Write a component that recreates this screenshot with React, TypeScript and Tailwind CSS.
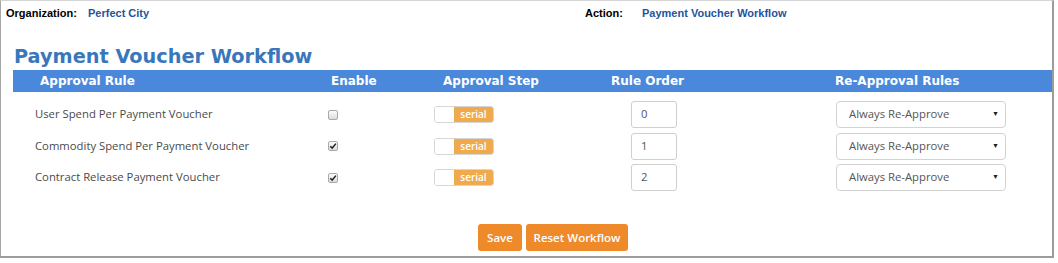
import React from "react";

const rules = [
  { name: "User Spend Per Payment Voucher", enabled: false, order: "0" },
  { name: "Commodity Spend Per Payment Voucher", enabled: true, order: "1" },
  { name: "Contract Release Payment Voucher", enabled: true, order: "2" },
];

const cols = "grid grid-cols-[297px_100px_170px_180px_1fr]";

const Check = ({ on }: { on: boolean }) => (
  <span className="flex h-[10px] w-[10px] items-center justify-center rounded-[2px] border border-[#a9a9a9] bg-gradient-to-b from-[#fbfbfb] to-[#dcdcdc]">
    {on && (
      <svg viewBox="0 0 10 10" className="h-[8px] w-[8px]">
        <path d="M1.5 5.2 L4 7.6 L8.6 2" fill="none" stroke="#222" strokeWidth="1.8" />
      </svg>
    )}
  </span>
);

const Toggle = () => (
  <div className="flex h-[17px] w-[60px] overflow-hidden rounded-[3px] border border-[#d6d6d6]">
    <span className="w-[19px] bg-white" />
    <span className="flex flex-1 items-center justify-center bg-[#eeaa4c] text-[10px] font-semibold text-white">
      serial
    </span>
  </div>
);

export default function App() {
  return (
    <div className="h-[263px] w-[1058px] bg-white" style={{ fontFamily: '"Open Sans", sans-serif' }}>
      <div className="flex h-[258px] w-[1054px] flex-col border-t border-l border-r-2 border-b-2 border-t-[#d4d4d4] border-l-[#a6a6a6] border-r-[#9c9c9c] border-b-[#9c9c9c]">
        <div className="flex h-[24px] items-center text-[11px] font-bold" style={{ fontFamily: '"Liberation Sans", Arial, sans-serif' }}>
          <span className="ml-[5px] w-[82px] text-black">Organization:</span>
          <span className="w-[497px] text-[#24549f]">Perfect City</span>
          <span className="w-[57px] text-black">Action:</span>
          <span className="text-[#24549f]">Payment Voucher Workflow</span>
        </div>

        <h1
          className="mt-[18px] ml-[13px] text-[19.3px] leading-[27px] font-bold text-[#3977bc]"
          style={{ fontFamily: '"DejaVu Sans", Verdana, sans-serif' }}
        >
          Payment Voucher Workflow
        </h1>

        <div
          className={`${cols} ml-[12px] h-[22px] items-center bg-[#4a88dc] text-[12px] font-bold text-white`}
          style={{ fontFamily: '"DejaVu Sans", Verdana, sans-serif' }}
        >
          <span className="pl-[27px]">Approval Rule</span>
          <span className="pl-[21px]">Enable</span>
          <span className="pl-[33px]">Approval Step</span>
          <span className="pl-[31px]">Rule Order</span>
          <span className="pl-[75px]">Re-Approval Rules</span>
        </div>

        <div className="mt-[9px] ml-[12px] flex flex-col gap-[4.5px]">
          {rules.map((r) => (
            <div key={r.name} className={`${cols} h-[27px] items-center text-[11.3px] text-[#4a4a4a]`}>
              <span className="pl-[22px]">{r.name}</span>
              <span className="pl-[18px]">
                <Check on={r.enabled} />
              </span>
              <span className="pl-[24px]">
                <Toggle />
              </span>
              <span className="pl-[51px]">
                <div className="flex h-[27px] w-[46px] items-center rounded-[3px] border border-[#cfcfcf] pl-[9px] text-[#555]">
                  {r.order}
                </div>
              </span>
              <span className="pl-[76px]">
                <div className="flex h-[27px] w-[170px] items-center justify-between rounded-[4px] border border-[#d3d3d3] pr-[6px] pl-[12px] text-[#555]">
                  <span>Always Re-Approve</span>
                  <span className="text-[7px] text-[#222]">▼</span>
                </div>
              </span>
            </div>
          ))}
        </div>

        <div className="mt-[33px] flex gap-[4px] pl-[477px]">
          <button className="h-[27px] w-[44px] rounded-[3px] bg-[#ef8a2b] text-[11.5px] font-semibold text-white">
            Save
          </button>
          <button className="h-[27px] w-[102px] rounded-[3px] bg-[#ef8a2b] text-[11.5px] font-semibold text-white">
            Reset Workflow
          </button>
        </div>
      </div>
    </div>
  );
}
